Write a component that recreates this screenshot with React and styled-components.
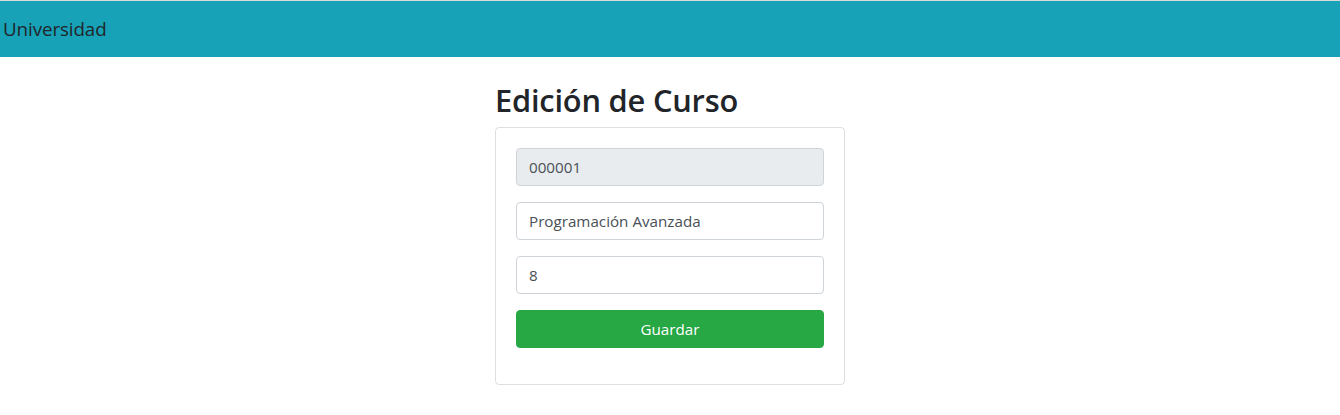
import React from "react";
import styled, { createGlobalStyle } from "styled-components";

const Global = createGlobalStyle`
  html, body { margin: 0; padding: 0; background: #fff; }
  body {
    font-family: "Open Sans", "Noto Sans", Arial, sans-serif;
    color: #212529;
    border-top: 1px solid #dadada;
  }
  * { box-sizing: border-box; }
`;

const Navbar = styled.nav`
  height: 56px;
  background: #17a2b8;
  display: flex;
  align-items: center;
  padding: 0 3px;
`;

const Brand = styled.span`
  font-size: 18.8px;
  color: #212529;
  letter-spacing: -0.1px;
`;

const Main = styled.main`
  width: 350px;
  margin: 24px auto 0;
`;

const Title = styled.h1`
  margin: 0 0 8px;
  font-size: 30.8px;
  font-weight: 600;
  line-height: 38px;
  letter-spacing: -0.2px;
  padding-left: 0;
`;

const Card = styled.div`
  border: 1px solid rgba(0, 0, 0, 0.125);
  border-radius: 4px;
  padding: 20px 20px 36px;
  display: flex;
  flex-direction: column;
  gap: 16px;
`;

const Input = styled.input`
  height: 38px;
  width: 100%;
  padding: 6px 12px;
  font-family: inherit;
  font-size: 15.2px;
  color: #495057;
  background: ${(p) => (p.disabled ? "#e9ecef" : "#fff")};
  border: 1px solid #ced4da;
  border-radius: 4px;
  outline: none;
  &:disabled { color: #495057; opacity: 1; -webkit-text-fill-color: #495057; }
`;

const Button = styled.button`
  height: 38px;
  width: 100%;
  border: 1px solid #28a745;
  background: #28a745;
  color: #fff;
  font-family: inherit;
  font-size: 15.2px;
  border-radius: 4px;
  cursor: pointer;
`;

export default function App() {
  return (
    <>
      <Global />
      <Navbar>
        <Brand>Universidad</Brand>
      </Navbar>
      <Main>
        <Title>Edición de Curso</Title>
        <Card>
          <Input disabled defaultValue="000001" />
          <Input defaultValue="Programación Avanzada" />
          <Input defaultValue="8" />
          <Button>Guardar</Button>
        </Card>
      </Main>
    </>
  );
}
